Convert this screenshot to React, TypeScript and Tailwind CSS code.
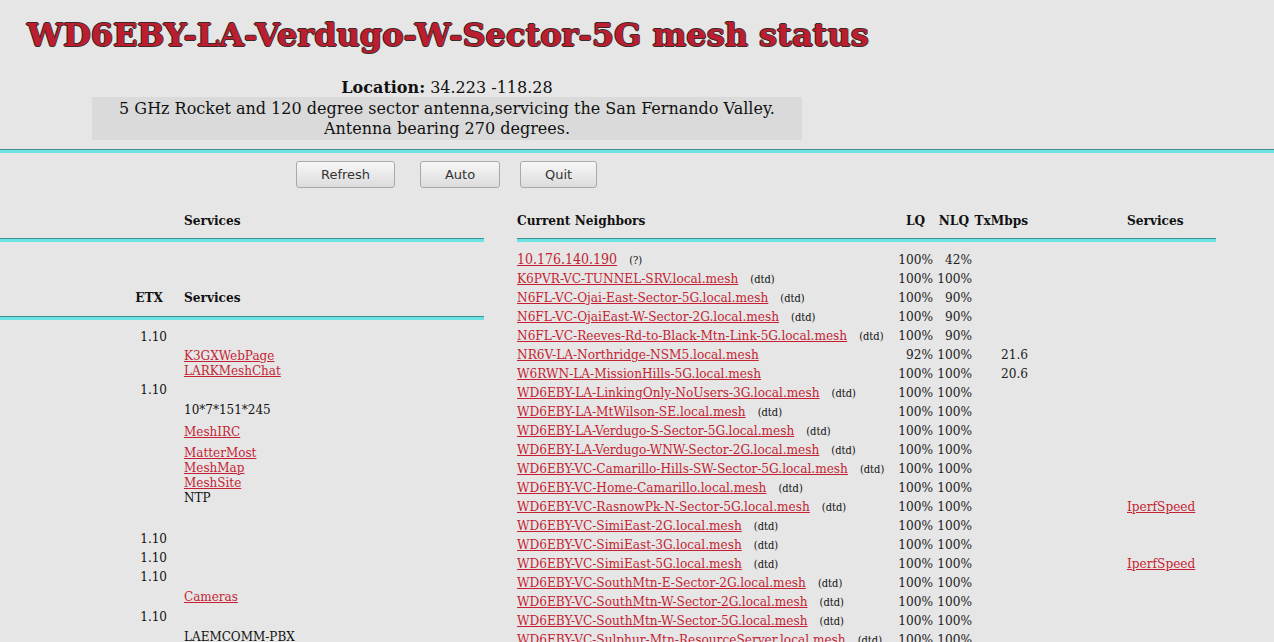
import React from "react";

const serif = "font-['DejaVu_Serif',serif]";
const cond = "font-['DejaVu_Serif_Condensed','DejaVu_Serif',serif] [font-stretch:condensed]";
const linkCls = "text-[#c41f33] underline";

function Hr({ className = "" }: { className?: string }) {
  return (
    <div className={"border-t border-[#3f8f8f] bg-[#6ee3e3] h-[4px] " + className} />
  );
}

type N = { name: string; tag?: string; lq: string; nlq: string; tx?: string; svc?: string; big?: boolean };

const neighbors: N[] = [
  { name: "10.176.140.190", tag: "(?)", lq: "100%", nlq: "42%", big: true },
  { name: "K6PVR-VC-TUNNEL-SRV.local.mesh", tag: "(dtd)", lq: "100%", nlq: "100%" },
  { name: "N6FL-VC-Ojai-East-Sector-5G.local.mesh", tag: "(dtd)", lq: "100%", nlq: "90%" },
  { name: "N6FL-VC-OjaiEast-W-Sector-2G.local.mesh", tag: "(dtd)", lq: "100%", nlq: "90%" },
  { name: "N6FL-VC-Reeves-Rd-to-Black-Mtn-Link-5G.local.mesh", tag: "(dtd)", lq: "100%", nlq: "90%" },
  { name: "NR6V-LA-Northridge-NSM5.local.mesh", lq: "92%", nlq: "100%", tx: "21.6" },
  { name: "W6RWN-LA-MissionHills-5G.local.mesh", lq: "100%", nlq: "100%", tx: "20.6" },
  { name: "WD6EBY-LA-LinkingOnly-NoUsers-3G.local.mesh", tag: "(dtd)", lq: "100%", nlq: "100%" },
  { name: "WD6EBY-LA-MtWilson-SE.local.mesh", tag: "(dtd)", lq: "100%", nlq: "100%" },
  { name: "WD6EBY-LA-Verdugo-S-Sector-5G.local.mesh", tag: "(dtd)", lq: "100%", nlq: "100%" },
  { name: "WD6EBY-LA-Verdugo-WNW-Sector-2G.local.mesh", tag: "(dtd)", lq: "100%", nlq: "100%" },
  { name: "WD6EBY-VC-Camarillo-Hills-SW-Sector-5G.local.mesh", tag: "(dtd)", lq: "100%", nlq: "100%" },
  { name: "WD6EBY-VC-Home-Camarillo.local.mesh", tag: "(dtd)", lq: "100%", nlq: "100%" },
  { name: "WD6EBY-VC-RasnowPk-N-Sector-5G.local.mesh", tag: "(dtd)", lq: "100%", nlq: "100%", svc: "IperfSpeed" },
  { name: "WD6EBY-VC-SimiEast-2G.local.mesh", tag: "(dtd)", lq: "100%", nlq: "100%" },
  { name: "WD6EBY-VC-SimiEast-3G.local.mesh", tag: "(dtd)", lq: "100%", nlq: "100%" },
  { name: "WD6EBY-VC-SimiEast-5G.local.mesh", tag: "(dtd)", lq: "100%", nlq: "100%", svc: "IperfSpeed" },
  { name: "WD6EBY-VC-SouthMtn-E-Sector-2G.local.mesh", tag: "(dtd)", lq: "100%", nlq: "100%" },
  { name: "WD6EBY-VC-SouthMtn-W-Sector-2G.local.mesh", tag: "(dtd)", lq: "100%", nlq: "100%" },
  { name: "WD6EBY-VC-SouthMtn-W-Sector-5G.local.mesh", tag: "(dtd)", lq: "100%", nlq: "100%" },
  { name: "WD6EBY-VC-Sulphur-Mtn-ResourceServer.local.mesh", tag: "(dtd)", lq: "100%", nlq: "100%" },
  { name: "WD6EBY-VC-Sulphur-Mtn-Sector-5G.local.mesh", tag: "(dtd)", lq: "100%", nlq: "100%" },
];

type LRow =
  | { kind: "etx"; v: string }
  | { kind: "svc"; items: { t: string; link: boolean }[]; h: string; pt: string }
  | { kind: "empty"; h: string };

const leftRows: LRow[] = [
  { kind: "etx", v: "1.10" },
  { kind: "svc", items: [{ t: "K3GXWebPage", link: true }, { t: "LARKMeshChat", link: true }], h: "h-[34px]", pt: "pt-[3px]" },
  { kind: "etx", v: "1.10" },
  { kind: "svc", items: [{ t: "10*7*151*245", link: false }], h: "h-[21px]", pt: "pt-[4px]" },
  { kind: "svc", items: [{ t: "MeshIRC", link: true }], h: "h-[22px]", pt: "pt-[5px]" },
  {
    kind: "svc",
    items: [
      { t: "MatterMost", link: true },
      { t: "MeshMap", link: true },
      { t: "MeshSite", link: true },
      { t: "NTP", link: false },
    ],
    h: "h-[66px]",
    pt: "pt-[4px]",
  },
  { kind: "empty", h: "h-[21px]" },
  { kind: "etx", v: "1.10" },
  { kind: "etx", v: "1.10" },
  { kind: "etx", v: "1.10" },
  { kind: "svc", items: [{ t: "Cameras", link: true }], h: "h-[21px]", pt: "pt-[4px]" },
  { kind: "etx", v: "1.10" },
  { kind: "svc", items: [{ t: "LAEMCOMM-PBX", link: false }], h: "h-[21px]", pt: "pt-[4px]" },
  { kind: "etx", v: "1.10" },
];

function Button({ label, w }: { label: string; w: string }) {
  return (
    <button
      className={
        "h-[27px] rounded-[3px] border border-[#a9a9a9] bg-gradient-to-b from-[#f7f7f7] to-[#dcdcdc] font-['DejaVu_Sans',sans-serif] text-[13px] text-[#333] " +
        w
      }
    >
      {label}
    </button>
  );
}

export default function App() {
  return (
    <div className={"min-h-screen bg-[#e6e6e6] text-[#111] " + serif}>
      <h1 className="pl-[27px] pt-[13px] h-[72px] text-[32px] leading-[44px] font-bold text-[#bd1e2f] [text-shadow:1px_0_0_#3a2a2a,-1px_0_0_#3a2a2a,0_1px_0_#3a2a2a,0_-1px_0_#3a2a2a]">
        WD6EBY-LA-Verdugo-W-Sector-5G mesh status
      </h1>
      <div className="ml-[92px] w-[710px] text-center">
        <div className="h-[25px] pt-[6px] text-[16px] leading-[19px]">
          <span className="font-bold">Location:</span> 34.223 -118.28
        </div>
        <div className="bg-[#dadada] h-[43px] pt-[2px] text-[16px] leading-[20px]">
          5 GHz Rocket and 120 degree sector antenna,servicing the San Fernando Valley.
          <br />
          Antenna bearing 270 degrees.
        </div>
      </div>
      <Hr className="mt-[9px]" />
      <div className="flex pl-[296px] pt-[8px] h-[43px]">
        <Button label="Refresh" w="w-[99px]" />
        <div className="w-[25px]" />
        <Button label="Auto" w="w-[80px]" />
        <div className="w-[20px]" />
        <Button label="Quit" w="w-[77px]" />
      </div>
      <div className="flex items-start pt-[12px]">
        {/* left table */}
        <div className="w-[484px]">
          <div className={"flex h-[24px] items-center text-[13.5px] font-bold " + cond}>
            <div className="w-[184px]" />
            <div>Services</div>
          </div>
          <Hr className="mt-[6px]" />
          <div className="h-[43px]" />
          <div className={"flex h-[24px] items-center text-[13.5px] font-bold " + cond}>
            <div className="w-[163px] text-right">ETX</div>
            <div className="w-[21px]" />
            <div>Services</div>
          </div>
          <Hr className="mt-[7px]" />
          <div className="h-[7px]" />
          <div className="text-[12px]">
            {leftRows.map((r, i) => {
              if (r.kind === "etx")
                return (
                  <div key={i} className="flex h-[19px] items-center">
                    <div className="w-[167px] text-right">{r.v}</div>
                  </div>
                );
              if (r.kind === "empty") return <div key={i} className={r.h} />;
              return (
                <div key={i} className={"flex " + r.h + " " + r.pt}>
                  <div className="w-[184px]" />
                  <div className="flex flex-col leading-[15px]">
                    {r.items.map((it) => (
                      <span key={it.t} className={it.link ? linkCls : ""}>
                        {it.t}
                      </span>
                    ))}
                  </div>
                </div>
              );
            })}
          </div>
        </div>
        <div className="w-[33px]" />
        {/* right table */}
        <div className="w-[699px]">
          <div className={"grid grid-cols-[380px_28px_44px_59px_99px_1fr] h-[24px] items-center text-[13.5px] font-bold " + cond}>
            <div>Current Neighbors</div>
            <div className="text-right">LQ</div>
            <div className="text-right">NLQ</div>
            <div className="text-right">TxMbps</div>
            <div />
            <div>Services</div>
          </div>
          <Hr className="mt-[6px]" />
          <div className="h-[7px]" />
          <div className={"text-[13.5px] " + cond}>
            {neighbors.map((n) => (
              <div key={n.name} className="grid grid-cols-[380px_36px_39px_56px_99px_1fr] h-[19px] items-center text-[#222]">
                <div className="whitespace-nowrap">
                  <span className={linkCls + (n.big ? " text-[14px]" : "")}>{n.name}</span>
                  {n.tag && <span className="ml-[12px] text-[11px] text-[#111]">{n.tag}</span>}
                </div>
                <div className="text-right">{n.lq}</div>
                <div className="text-right">{n.nlq}</div>
                <div className="text-right">{n.tx ?? ""}</div>
                <div />
                <div>{n.svc && <span className={linkCls}>{n.svc}</span>}</div>
              </div>
            ))}
          </div>
        </div>
      </div>
    </div>
  );
}
